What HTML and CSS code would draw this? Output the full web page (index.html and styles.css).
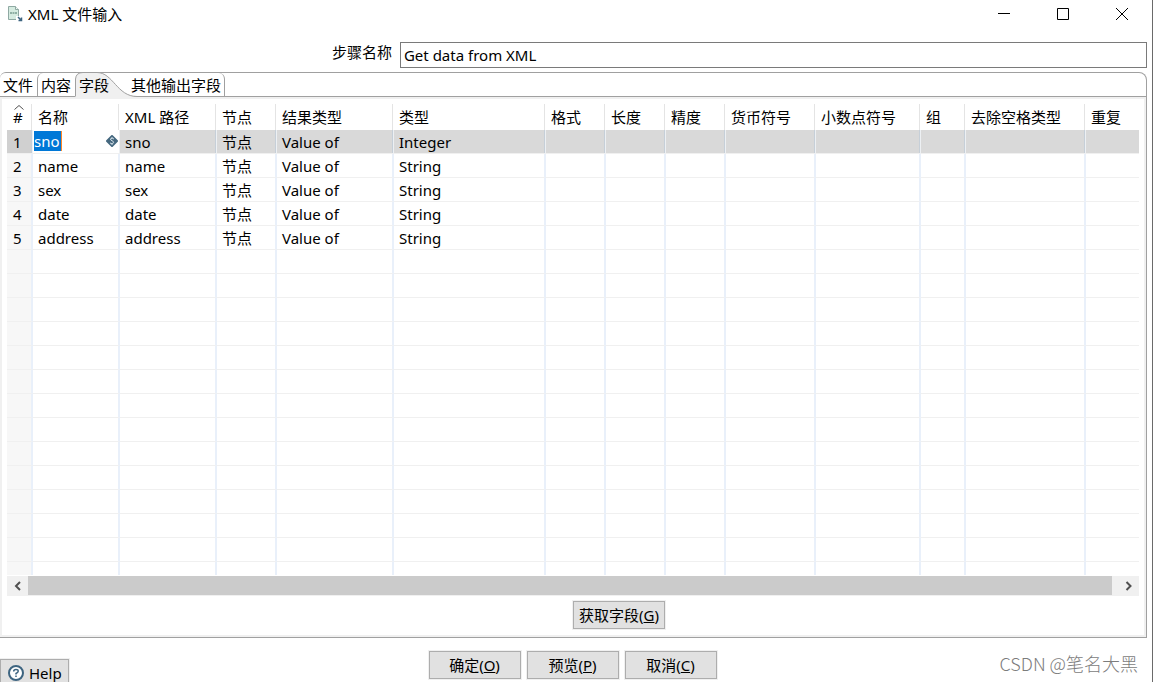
FILE: index.html
```
<!DOCTYPE html>
<html lang="zh-CN">
<head>
    <meta charset="UTF-8">
    <meta name="viewport" content="width=device-width, initial-scale=1.0">
    <title>XML 文件输入</title>
    <link rel="stylesheet" href="styles.css">
</head>
<body>
    <div class="title-bar">
        <svg class="app-icon" width="16" height="16" viewBox="0 0 16 16">
            <path d="M1.500 .5h7l3 3v10h-10z" fill="#d5ebe0" stroke="#8fa9a3"/>
            <path d="M8.500 .5v3h3" fill="#eef7f2" stroke="#8fa9a3"/>
            <path d="M3 7h7" stroke="#8fb0a4" stroke-width="2" stroke-dasharray="2 .5" fill="none"/>
            <path d="M9 10h7v6H9z" fill="#fff"/>
            <path d="M11 11l3 3M14.500 11.500v3h-3" stroke="#3d6480" stroke-width="1.500" fill="none"/>
        </svg>
        <h1>XML 文件输入</h1>
        <div class="window-buttons">
            <button type="button" aria-label="最小化">
                <svg width="12" height="12" viewBox="0 0 12 12"><path d="M0 5.500h12"/></svg>
            </button>
            <button type="button" aria-label="最大化">
                <svg width="12" height="12" viewBox="0 0 12 12"><path d="M.5 .5h11v11h-11z"/></svg>
            </button>
            <button type="button" aria-label="关闭">
                <svg width="12" height="12" viewBox="0 0 12 12"><path d="M0 0l12 12M12 0L0 12"/></svg>
            </button>
        </div>
    </div>

    <div class="step-row">
        <label for="stepName">步骤名称</label>
        <input type="text" id="stepName" value="Get data from XML">
    </div>

    <div class="tabs">
        <button type="button" class="tab">文件</button>
        <button type="button" class="tab">内容</button>
        <button type="button" class="tab active">
            <svg class="tab-shape" width="64" height="25" viewBox="0 0 64 25">
                <path d="M.5 25V7Q1 .5 8 .5H22C38 .5 42 24.500 62 24.500V25z" fill="#f0f0f0"/>
                <path d="M.5 24V7Q1 .5 8 .5H22C38 .5 42 24.500 62 24.500" fill="none" stroke="#a0a0a0"/>
            </svg>
            字段
        </button>
        <button type="button" class="tab last">其他输出字段</button>
    </div>

    <div class="panel">
        <div class="table-box">
            <table>
                <colgroup>
                    <col class="w-index"><col class="w-name"><col class="w-path"><col class="w-small">
                    <col class="w-result"><col class="w-type"><col class="w-small"><col class="w-small">
                    <col class="w-small"><col class="w-currency"><col class="w-decimal"><col class="w-group">
                    <col class="w-trim"><col>
                </colgroup>
                <thead>
                    <tr>
                        <th><svg class="sort" width="10" height="5" viewBox="0 0 10 5"><path d="M.5 4.500L5 .5l4.500 4"/></svg>#</th>
                        <th>名称</th><th>XML 路径</th><th>节点</th><th>结果类型</th><th>类型</th><th>格式</th>
                        <th>长度</th><th>精度</th><th>货币符号</th><th>小数点符号</th><th>组</th><th>去除空格类型</th><th>重复</th>
                    </tr>
                </thead>
                <tbody id="fields">
                    <tr class="selected">
                        <td>1</td>
                        <td class="editing">
                            <div class="editor">
                                <input type="text" value="sno" aria-label="名称">
                                <svg width="12" height="12" viewBox="0 0 12 12">
                                    <path d="M6 1l5 5-5 5-5-5z" fill="#45687f" stroke="#45687f" stroke-width="2" stroke-linejoin="round"/>
                                    <path d="M8 4Q6 2.500 4.500 3.800C4 6 8 5.500 7.700 7.700Q6 9.500 4 8M6 2v1M6 9v1" fill="none" stroke="#d3dfe7"/>
                                </svg>
                            </div>
                        </td>
                        <td>sno</td><td>节点</td><td>Value of</td><td>Integer</td>
                        <td></td><td></td><td></td><td></td><td></td><td></td><td></td><td></td>
                    </tr>
                    <tr>
                        <td>2</td><td>name</td><td>name</td><td>节点</td><td>Value of</td><td>String</td>
                        <td></td><td></td><td></td><td></td><td></td><td></td><td></td><td></td>
                    </tr>
                    <tr>
                        <td>3</td><td>sex</td><td>sex</td><td>节点</td><td>Value of</td><td>String</td>
                        <td></td><td></td><td></td><td></td><td></td><td></td><td></td><td></td>
                    </tr>
                    <tr>
                        <td>4</td><td>date</td><td>date</td><td>节点</td><td>Value of</td><td>String</td>
                        <td></td><td></td><td></td><td></td><td></td><td></td><td></td><td></td>
                    </tr>
                    <tr>
                        <td>5</td><td>address</td><td>address</td><td>节点</td><td>Value of</td><td>String</td>
                        <td></td><td></td><td></td><td></td><td></td><td></td><td></td><td></td>
                    </tr>
                </tbody>
            </table>
        </div>
        <div class="scrollbar">
            <button type="button" aria-label="向左滚动">
                <svg width="8" height="10" viewBox="0 0 8 10"><path d="M6 1L2 5l4 4"/></svg>
            </button>
            <div class="thumb"></div>
            <button type="button" aria-label="向右滚动">
                <svg width="8" height="10" viewBox="0 0 8 10"><path d="M1.500 1l4 4-4 4"/></svg>
            </button>
        </div>
        <button type="button" class="btn get-fields">获取字段(<u>G</u>)</button>
    </div>

    <div class="footer">
        <button type="button" class="btn help">
            <svg width="16" height="16" viewBox="0 0 16 16">
                <circle cx="8" cy="8" r="7" fill="#fff" stroke="#3d6480" stroke-width="2"/>
                <path d="M5.700 6.500Q5.700 4.500 8 4.500T10.200 6.300Q10.200 7.300 8 8.500V9.500M8 10.500v1.500" fill="none" stroke="#3d6480" stroke-width="1.500"/>
            </svg>
            Help
        </button>
        <div class="actions">
            <button type="button" class="btn">确定(<u>O</u>)</button>
            <button type="button" class="btn">预览(<u>P</u>)</button>
            <button type="button" class="btn">取消(<u>C</u>)</button>
        </div>
        <span class="watermark">CSDN @笔名大黑</span>
    </div>

    <script>
        // 用空行填满表格
        const fields = document.getElementById('fields');
        for (let i = 0; i < 40; i++) {
            const row = fields.insertRow();
            for (let j = 0; j < 14; j++) {
                row.insertCell();
            }
        }
    </script>
</body>
</html>
```
FILE: styles.css
```
* {
    box-sizing: border-box;
}
body {
    display: flex;
    flex-direction: column;
    height: 100vh;
    margin: 0;
    overflow: hidden;
    border-right: 1px solid #6a6a6a;
    background-color: #fff;
    color: #000;
    font-family: 'Noto Sans', 'Noto Sans CJK SC', sans-serif;
    font-size: 15px;
    line-height: 20px;
}
button, input {
    margin: 0;
    padding: 0;
    border: none;
    background: none;
    color: inherit;
    font: inherit;
}
svg {
    flex: none;
}
.title-bar {
    display: flex;
    align-items: center;
    height: 28px;
    padding: 0 1px 0 7px;
}
.title-bar h1 {
    flex: 1;
    margin: 0 0 0 5px;
    font-size: 15px;
    font-weight: normal;
}
.window-buttons {
    display: flex;
}
.window-buttons button {
    display: flex;
    align-items: center;
    justify-content: center;
    width: 59px;
    height: 28px;
}
.window-buttons path {
    fill: none;
    stroke: #000;
}
.step-row {
    display: flex;
    gap: 8px;
    margin: 14px 5px 4px 3px;
}
.step-row label {
    width: 34%;
    text-align: right;
}
.step-row input {
    flex: 1;
    height: 26px;
    padding: 0 3px;
    border: 1px solid #7a7a7a;
}
.tabs {
    display: flex;
    height: 25px;
    margin-right: 5px;
    border: 1px solid #a0a0a0;
    border-left: none;
    border-radius: 6px 8px 0 0;
}
.tab {
    padding: 0 4px 0 3px;
    border-left: 1px solid #a0a0a0;
    border-radius: 6px 0 0 0;
    white-space: nowrap;
}
.tab:first-child {
    border-left: none;
}
.tab.active {
    position: relative;
    z-index: 1;
    padding-right: 19px;
    border-left-color: transparent;
}
/* 选中标签的弧形背景 */
.tab-shape {
    position: absolute;
    top: -1px;
    left: -1px;
    z-index: -1;
}
.tab.last {
    padding-right: 3px;
    border-left: none;
    border-right: 1px solid #a0a0a0;
    border-radius: 0 6px 0 0;
}
.panel {
    flex: 1;
    display: flex;
    flex-direction: column;
    min-height: 0;
    margin-right: 6px;
    padding: 5px 5px 6px;
    border: 2px solid #f0f0f0;
    box-shadow: 1px 0 0 #a0a0a0, 1px 1px 0 #a0a0a0, 0 1px 0 #a0a0a0;
}
.table-box {
    flex: 1;
    min-height: 0;
    overflow: hidden;
}
table {
    width: 100%;
    table-layout: fixed;
    border-spacing: 0;
}
.w-index { width: 26px; }
.w-name { width: 87px; }
.w-path { width: 97px; }
.w-small { width: 60px; }
.w-result { width: 117px; }
.w-type { width: 152px; }
.w-currency { width: 90px; }
.w-decimal { width: 105px; }
.w-group { width: 45px; }
.w-trim { width: 120px; }
th {
    position: relative;
    height: 26px;
    padding: 0 0 0 5px;
    border-right: 1px solid #fff;
    box-shadow: inset -1px 0 0 #e4e4e4;
    font-weight: normal;
    text-align: left;
    white-space: nowrap;
}
td {
    height: 24px;
    padding: 0 0 0 5px;
    border-right: 2px solid #e9f0fa;
    border-bottom: 1px solid #f0f0f0;
    white-space: nowrap;
}
th:first-child, td:first-child {
    padding-left: 6px;
}
td:first-child {
    background-color: #f7f7f7;
}
.sort {
    position: absolute;
    top: 1px;
    left: 7px;
    fill: none;
    stroke: #505050;
}
.selected td {
    background-color: #d9d9d9;
    border-right: 1px solid #edf0f3;
    box-shadow: inset -1px 0 0 #c6cfd8;
}
.selected td:first-child {
    background-color: #d0d0d0;
}
.selected .editing {
    padding: 0 0 0 1px;
    background-color: #fff;
    box-shadow: none;
}
th:last-child, td:last-child, .selected td:last-child {
    border-right: none;
    box-shadow: none;
}
.editor {
    display: flex;
    align-items: center;
    justify-content: space-between;
    height: 23px;
    padding: 0 1px 2px 0;
}
.editor input {
    width: 28px;
    height: 20px;
    border-right: 1px solid #ff8728;
    background-color: #0078d7;
    color: #fff;
}
.scrollbar {
    display: flex;
    height: 20px;
    margin-top: 1px;
    border-bottom: 1px solid #f0f0f0;
    background-color: #f0f0f0;
}
.scrollbar button {
    display: flex;
    align-items: center;
    justify-content: center;
    width: 21px;
}
.scrollbar path {
    fill: none;
    stroke: #505050;
    stroke-width: 2;
}
.thumb {
    flex: 1;
    margin-right: 6px;
    background-color: #cbcbcb;
}
.btn {
    height: 28px;
    border: 1px solid #adadad;
    background-color: #e1e1e1;
    box-shadow: 0 0 0 1px #f0f0f0;
    white-space: nowrap;
}
.get-fields {
    width: 92px;
    margin: 5px 0 0 50%;
}
.footer {
    position: relative;
    display: flex;
    justify-content: center;
    height: 45px;
    padding: 14px 7px 0 0;
}
.actions {
    display: flex;
    gap: 6px;
}
.actions .btn {
    width: 92px;
}
/* 帮助按钮固定在左下角 */
.help {
    position: absolute;
    top: 22px;
    left: 0;
    display: flex;
    align-items: center;
    gap: 5px;
    padding: 0 6px 0 7px;
}
.watermark {
    position: absolute;
    right: 14px;
    bottom: 9px;
    color: #7c7c7c;
    font-family: 'Noto Sans CJK SC', sans-serif;
    font-size: 18px;
    font-weight: 300;
}
```
